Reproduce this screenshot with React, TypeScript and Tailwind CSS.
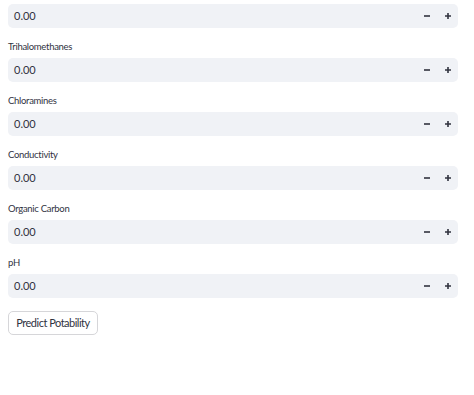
import React from 'react';

const fields = ['', 'Trihalomethanes', 'Chloramines', 'Conductivity', 'Organic Carbon', 'pH'];

const NumberInput: React.FC = () => (
    <div className="h-6 w-[450px] rounded-[5px] bg-[#f0f2f6] flex items-center pl-[6px]">
        <span className="flex-grow text-[11px] text-[#31333f]">0.00</span>
        <button className="w-[21px] h-6 flex items-center justify-center">
            <svg width="8" height="8" viewBox="0 0 8 8"><path d="M1 4h6" stroke="#31333f" strokeWidth="1.6" /></svg>
        </button>
        <button className="w-[21px] h-6 flex items-center justify-center">
            <svg width="8" height="8" viewBox="0 0 8 8"><path d="M1 4h6M4 1v6" stroke="#31333f" strokeWidth="1.6" /></svg>
        </button>
    </div>
);

const App: React.FC = () => {
    return (
        <div className="w-[474px] h-[395px] bg-white px-2 pt-1 font-['Lato',sans-serif] text-[#31333f]">
            <div className="flex flex-col gap-3">
                {fields.map((label, i) => (
                    <div key={i} className="flex flex-col gap-1">
                        {label && <div className="h-[14px] leading-[14px] text-[9.5px] tracking-[-0.3px]">{label}</div>}
                        <NumberInput />
                    </div>
                ))}
                <div className="-mt-[1px]">
                    <button className="h-6 w-[90px] rounded-[5px] border border-[#d6d6d9] bg-white text-[11px] tracking-[-0.5px] text-[#31333f]">
                        Predict Potability
                    </button>
                </div>
            </div>
        </div>
    );
};

export default App;
